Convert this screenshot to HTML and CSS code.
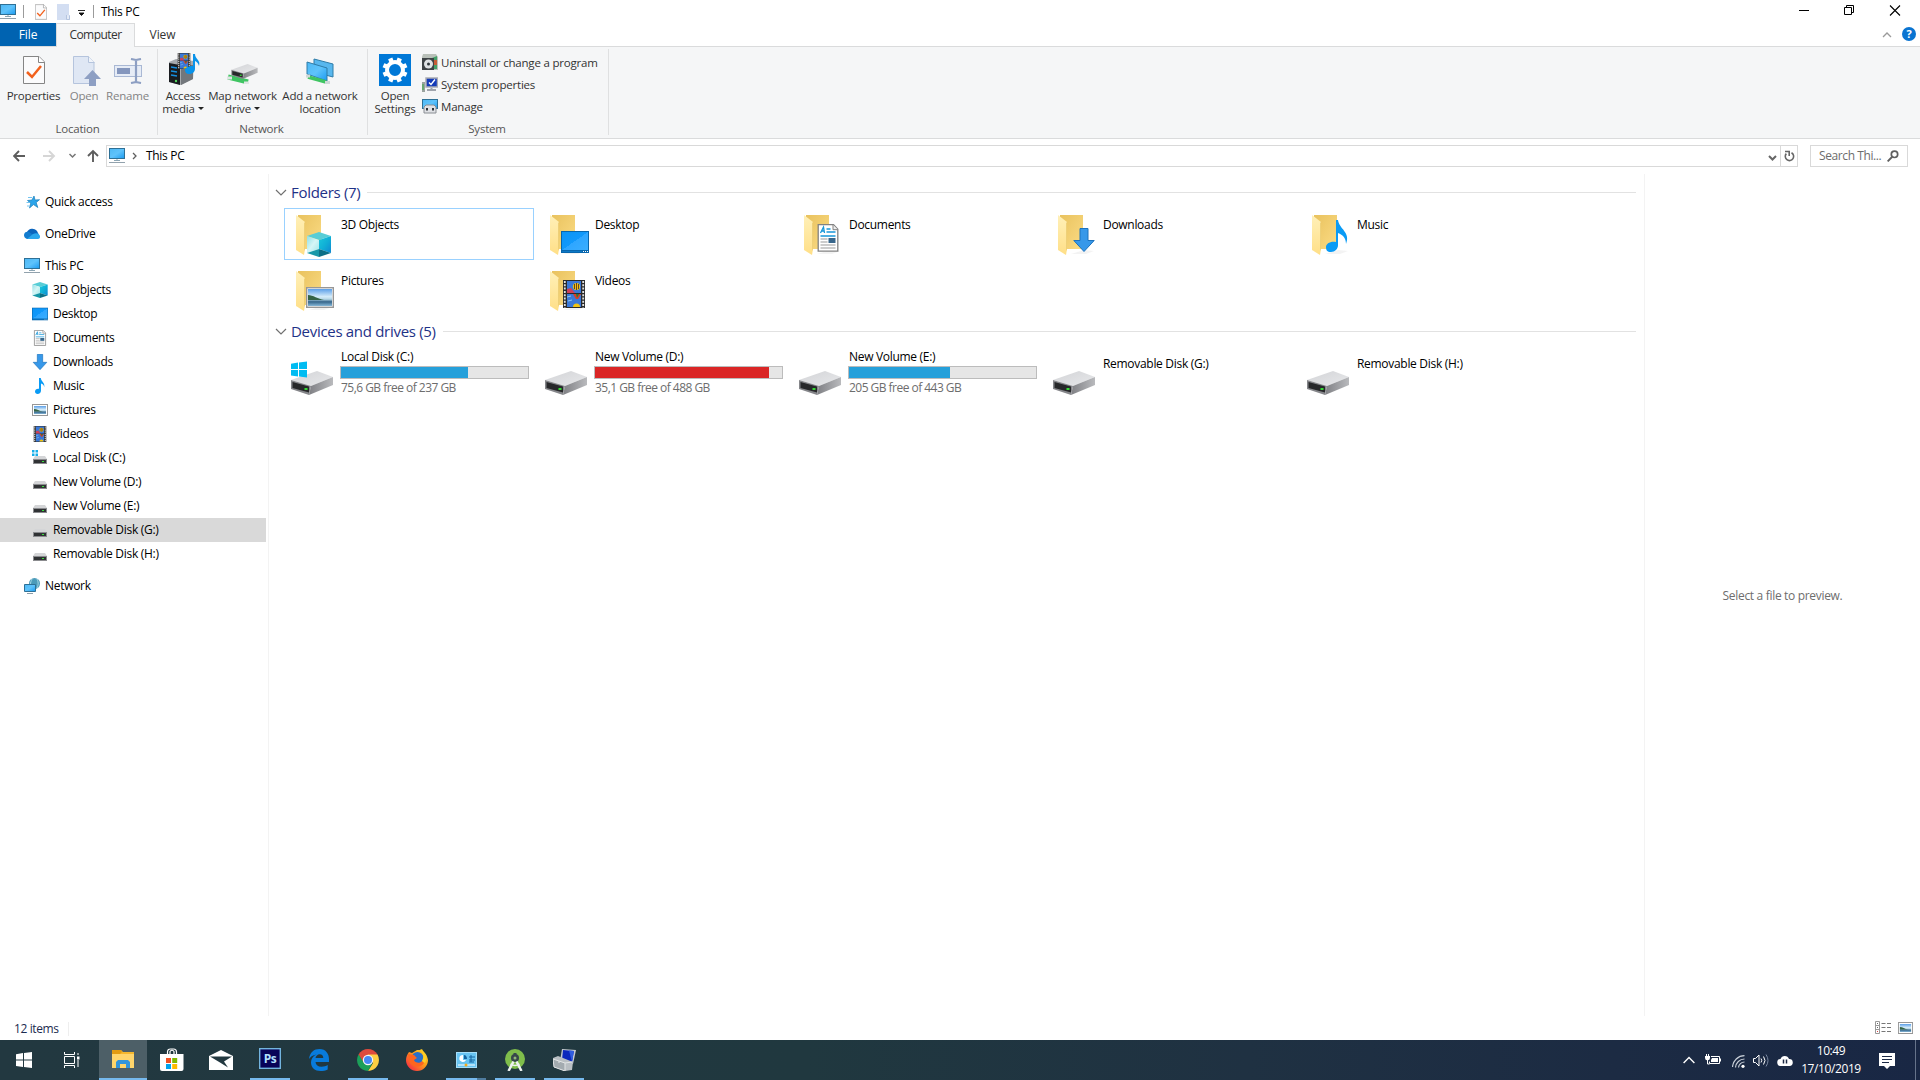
FILE: index.html
```html
<!DOCTYPE html>
<html lang="en">
<head>
<meta charset="utf-8">
<title>This PC</title>
<link rel="stylesheet" href="styles.css">
</head>
<body>
<svg class="sprite" aria-hidden="true">
  <defs>
    <linearGradient id="g-screen" x1="0" y1="0" x2="1" y2="1"><stop offset="0" stop-color="#4db8f5"/><stop offset=".5" stop-color="#5fc3fb"/><stop offset="1" stop-color="#1a9af0"/></linearGradient>
    <linearGradient id="g-desk" x1="0" y1="0" x2="1" y2="1"><stop offset="0" stop-color="#0c94f5"/><stop offset=".5" stop-color="#1199fb"/><stop offset=".5" stop-color="#2ea6ff"/><stop offset="1" stop-color="#3aaeff"/></linearGradient>
    <linearGradient id="g-back" x1="0" y1="0" x2="1" y2="1"><stop offset="0" stop-color="#e9c25e"/><stop offset="1" stop-color="#fbdc85"/></linearGradient>
    <linearGradient id="g-front" x1="0" y1="0" x2="0" y2="1"><stop offset="0" stop-color="#fff0b8"/><stop offset="1" stop-color="#ffdf87"/></linearGradient>
    <linearGradient id="g-drive" x1="0" y1="0" x2="1" y2="1"><stop offset="0" stop-color="#d2d3d6"/><stop offset="1" stop-color="#e8e9eb"/></linearGradient>
    <linearGradient id="g-side" x1="0" y1="0" x2="1" y2="0"><stop offset="0" stop-color="#7f8084"/><stop offset="1" stop-color="#b9babd"/></linearGradient>
    <linearGradient id="g-sky" x1="0" y1="0" x2="0" y2="1"><stop offset="0" stop-color="#5b9fe8"/><stop offset=".45" stop-color="#d5ecfa"/><stop offset=".6" stop-color="#b4d6e6"/><stop offset=".75" stop-color="#35658a"/><stop offset="1" stop-color="#86b8d8"/></linearGradient>
    <linearGradient id="g-fox" x1="1" y1="0" x2="0" y2="1"><stop offset="0" stop-color="#ffe226"/><stop offset=".45" stop-color="#ff9a1a"/><stop offset="1" stop-color="#f5144c"/></linearGradient>
    <linearGradient id="g-cube-l" x1="0" y1="0" x2="1" y2="1"><stop offset="0" stop-color="#8fe0e6"/><stop offset=".5" stop-color="#d6f6f6"/><stop offset="1" stop-color="#9de6e9"/></linearGradient>
    <linearGradient id="g-cube-r" x1="0" y1="0" x2="1" y2="1"><stop offset="0" stop-color="#1cc8dc"/><stop offset=".5" stop-color="#10b0d6"/><stop offset="1" stop-color="#1088d2"/></linearGradient>
  </defs>
  <symbol id="pc" viewBox="0 0 16 16"><rect x=".5" y=".5" width="15" height="10" fill="url(#g-screen)" stroke="#2e7096"/><path d="M5 12.5h6M8 11v1.500" stroke="#8da6b4"/><path d="M0 14.500h16" stroke="#92a2ad"/></symbol>
  <symbol id="check" viewBox="0 0 22 28"><path d="M.5.500h15.500l5.500 5.500v21.500H.5z" fill="#fbfbfc" stroke="#858585"/><path d="M15.500.500v6h6" fill="#fff" stroke="#858585"/><path d="M4 16l5 5 9-11" fill="none" stroke="#f2611d" stroke-width="2.500"/></symbol>
  <symbol id="blankdoc" viewBox="0 0 13 16"><path d="M0 0h12v11h1v5H0z" fill="#d3def2"/><path d="M9.500 11v4.500h3v-4" fill="#e4ebf7" stroke="#b5c4df"/></symbol>
  <symbol id="opendoc" viewBox="0 0 28 30"><path d="M.5.500h15l5.500 5.500v21.500H.5z" fill="#dfe7f4" stroke="#b5c4dd"/><path d="M15.500.500v6h6" fill="#f0f4fa" stroke="#b5c4dd"/><path d="M19.500 14L28 23h-5v7h-7v-7h-5z" fill="#8d9fc3"/></symbol>
  <symbol id="rename" viewBox="0 0 28 26"><rect x=".5" y="7.500" width="27" height="11" fill="#e6ecf6" stroke="#a9b8d4"/><rect x="3" y="10" width="13" height="6" fill="#8496bd"/><path d="M22 1v24M17 1l5 1 5-1M17 25l5-1 5 1" fill="none" stroke="#8d9fc3" stroke-width="2.200"/></symbol>
  <symbol id="note" viewBox="0 0 16 16"><path d="M7 0h1.800c.2 3.500 4.500 4.500 3.400 9.300-.2-2.200-1.400-3.300-3.200-3.800v7C9 14.600 7.600 16 5.600 16 4 16 3 15 3 13.600c0-2 1.800-3.200 4-2.800z" fill="#0a9bf5"/></symbol>
  <symbol id="film" viewBox="0 0 22 28"><path fill="#292a2c" d="M0 0h22v28H0z"/><path d="M1.800 1v27M20.200 1v27" stroke="#e2e2de" stroke-width="1.800" stroke-dasharray="2 1.300"/><path fill="#3a78d8" d="M4 1h14v12H4zM4 14h14v13H4z"/><circle cx="13.500" cy="6.500" r="3.600" fill="#f0c312"/><path d="M13.500 3v7M11.500 4v5M15.500 4v5" stroke="#4a2217" stroke-width=".8"/><path d="M4 9l4-1 4 5H4z" fill="#cc405a"/><path d="M10 14h8l-3 5h-2z" fill="#db3d25"/><path d="M13 14h3l-2 4z" fill="#1c7a42"/><path d="M10 27a3.500 3.500 0 0 1 7 0z" fill="#f0c312"/><path d="M4 17l4-1M5 21l4-1" stroke="#8cc9f3"/></symbol>
  <symbol id="media" viewBox="0 0 32 32"><path d="M0 9l7-3 18 2-1 18-12 6L0 29z" fill="#a6aaae"/><path d="M0 10l11 2v20L0 29z" fill="#191c20"/><path d="M2 14l6 1M2 18l6 1M2 22l6 1" stroke="#168edf" stroke-width="1.500"/><circle cx="7" cy="28" r="1.200" fill="#52d45f"/><path d="M24 12v14l-12 6V12z" fill="#72777c"/><use href="#film" x="7" y="0" width="16" height="16" preserveAspectRatio="none"/><path d="M24 1h2c0 5 6 6 4 12-1-3-2-4-4-5v8c0 3-3 5-6 5s-4-2-4-4 3-4 8-4z" fill="#0a93ea"/></symbol>
  <symbol id="drive" viewBox="0 0 42 24"><path d="M0 9L26 0l16 6-22 9z" fill="url(#g-drive)"/><path d="M20 15l22-9v8L18 24z" fill="url(#g-side)"/><path d="M0 9l20 6-2 9L0 18z" fill="#85868a"/><path d="M1.500 11L18 15.500v6L1.500 17z" fill="#27282a"/><rect x="13.500" y="17" width="3" height="2" fill="#36d936"/></symbol>
  <symbol id="netdrive" viewBox="0 0 32 20"><path d="M1 13l20 5" stroke="#3fc462" stroke-width="5"/><path d="M0 14h5M17 19h5" stroke="#dfe5e4" stroke-width="3"/><use href="#drive" x="3" y="0" width="29" height="15" preserveAspectRatio="none"/></symbol>
  <symbol id="netloc" viewBox="0 0 28 26"><path d="M8 1l19 5v13L8 14z" fill="#58b7ee" stroke="#2f7ca8"/><path d="M1 4l20 6v13L1 16z" fill="url(#g-screen)" stroke="#2f7ca8"/><path d="M2 19l18 5" stroke="#3fc462" stroke-width="3.500"/><path d="M0 18h4M19 24.500h5" stroke="#cfd8d8" stroke-width="3"/></symbol>
  <symbol id="settings" viewBox="0 0 32 32"><path fill="#0078d7" d="M0 0h32v32H0z"/><circle cx="16" cy="16" r="8" fill="none" stroke="#fff" stroke-width="4"/><g stroke="#fff" stroke-width="4.500"><path d="M16 8V3.500M16 24v4.500M8 16H3.500M24 16h4.500" transform="rotate(22.500 16 16)"/><path d="M16 8V3.500M16 24v4.500M8 16H3.500M24 16h4.500" transform="rotate(67.500 16 16)"/></g></symbol>
  <symbol id="uninstall" viewBox="0 0 16 16"><path d="M1 0h13l2 3v13H0V3z" fill="#b9c0b9"/><path d="M10 4l5-2v13h-5z" fill="#43a168"/><path d="M12 6h3v5h-3z" fill="#c65d36"/><path d="M0 4h12v12H0z" fill="#3d4245"/><circle cx="6.500" cy="10" r="4.500" fill="#dfe2e4"/><circle cx="6.500" cy="10" r="1.500" fill="#30373b"/></symbol>
  <symbol id="sysprop" viewBox="0 0 16 16"><rect y="6" width="3" height="10" fill="#9aa39f"/><path d="M1 8v6" stroke="#39ad43"/><rect x="4" y="2" width="11.500" height="9" fill="#143bb8" stroke="#a9acb4" stroke-width="1.500"/><path d="M7 6.500l2 2 4-5" stroke="#fff" stroke-width="1.400" fill="none"/><path d="M5 14h9M9.500 12v2" stroke="#a0a4ac" stroke-width="2"/></symbol>
  <symbol id="manage" viewBox="0 0 16 16"><rect x=".5" y="1.500" width="15" height="9" fill="url(#g-screen)" stroke="#2e7096"/><path d="M2 9l2-2h8l2 2v6H2z" fill="#dfe1e5" stroke="#8a8e94"/><path d="M5 10v2.500M11 10v2.500" stroke="#30343a" stroke-width="2"/></symbol>
  <symbol id="star" viewBox="0 0 16 16"><path d="M10 2l1 4 4.500-.3L12.200 8.500l1.600 5L9.500 10.600 5.500 14l1.200-4.700L3.500 6.500 8 6z" fill="#2aa4ea" stroke="#167cba" stroke-width=".7"/><path d="M4 3.500h4M2.500 8.500h3M3 12h2.500" stroke="#72c4f1"/></symbol>
  <symbol id="onedrive" viewBox="0 0 16 16"><path d="M4 13a4 4 0 0 1-1-7 6 6 0 0 1 10-1l3 6-4 2z" fill="#0b65bd"/><path d="M3 13c-2-1-3-2-3-4 0-3 3-4 5-3l6 4 3 3z" fill="#127ccf"/><path d="M3 13l6-5c4-2 7 0 7 3 0 1-1 2-2 2z" fill="#2aa7ed"/></symbol>
  <symbol id="cube" viewBox="0 0 24 25"><path d="M12 0l12 4-12 4L0 4z" fill="#58cdd6"/><path d="M0 4l12 4v9L0 21z" fill="url(#g-cube-l)"/><path d="M12 8l12-4v17l-12-4z" fill="url(#g-cube-r)"/><path d="M0 21l12-4v8z" fill="#1798a8"/><path d="M12 17l12 4-12 4z" fill="#0c6f86"/></symbol>
  <symbol id="desk" viewBox="0 0 28 22"><path fill="#0866ad" d="M0 0h28v22H0z"/><path fill="url(#g-desk)" d="M1 1h26v18H1z"/><path d="M1 20.500h20" stroke="#0d78c5"/><path d="M22 20.500h5" stroke="#fff" stroke-dasharray="1 1"/></symbol>
  <symbol id="doc" viewBox="0 0 21 28"><path d="M.7.700H16l4.300 4.500v22H.7z" fill="#fff" stroke="#828282" stroke-width="1.300"/><path d="M15.500.700v5h5" fill="#eee" stroke="#828282"/><path d="M3 9l3-6 1 6M4 7h3M9 5h4M9 8h9M3 12h15" stroke="#1897d9" stroke-width="1.300" fill="none"/><path d="M3 15h7M3 18h7M3 21h15M3 24h15" stroke="#999"/><path d="M11 14h7v5h-7z" fill="#38668b"/></symbol>
  <symbol id="down" viewBox="0 0 22 24"><path d="M7 .500h8v12h6.200L11 23.500.8 12.500H7z" fill="#3798e9" stroke="#1c72bd"/></symbol>
  <symbol id="pic" viewBox="0 0 28 21"><rect x=".7" y=".7" width="26.600" height="19.600" fill="#fff" stroke="#979797" stroke-width="1.400"/><path fill="url(#g-sky)" d="M2 2h24v17H2z"/><path d="M2 8c5 0 10 4 16 5H2z" fill="#366446"/></symbol>
  <symbol id="minipic" viewBox="0 0 16 16"><rect x=".5" y="2.500" width="15" height="11" fill="#fff" stroke="#979797"/><path fill="url(#g-sky)" d="M2 4h12v8H2z"/><path d="M2 7c3 0 5 2 9 2.500H2z" fill="#366446"/></symbol>
  <symbol id="minidrive" viewBox="0 0 16 16"><path d="M3 7h10l2 3H1z" fill="#d4d5d7"/><path d="M1 10h14v5H1z" fill="#8b8c8f"/><path d="M2 11h12v3H2z" fill="#303234"/><path d="M10 12h2v1h-2z" fill="#38df3c"/></symbol>
  <symbol id="minic" viewBox="0 0 16 16"><use href="#minidrive" y="-1" width="16" height="16"/><path d="M0 0h2.500v2.500H0zM3.500 0H6v2.500H3.500zM0 3.500h2.500V6H0zM3.500 3.500H6V6H3.500z" fill="#14aeea"/></symbol>
  <symbol id="net" viewBox="0 0 16 16"><circle cx="10.500" cy="5.500" r="5.500" fill="#4c9bb9"/><path d="M8 1c-2 4-2 7 0 9M13 1c2 4 1 7 0 9" stroke="#a7d9e6" fill="none"/><path d="M.5 6.500h11v7H.5z" fill="url(#g-screen)" stroke="#2e7096"/><path d="M3 15.500h6" stroke="#8b9da8"/></symbol>
  <symbol id="folder" viewBox="0 0 36 42"><path d="M2 0h23v34H2z" fill="url(#g-back)"/><path d="M26 35l10 1-8 3H13z" fill="#d7d7d7" opacity=".3"/><path d="M0 0l9 7v27l-1 6L0 35z" fill="url(#g-front)"/><path d="M9 7v27l-1 2V8z" fill="#eed078"/></symbol>
  <symbol id="win" viewBox="0 0 16 16"><path d="M0 2.200L7 1v6.600H0zM8 .9L16 0v7.600H8zM0 8.400h7V15l-7-1zM8 8.400h8V16l-8-1z"/></symbol>
</svg>

<header class="titlebar">
  <svg class="i16"><use href="#pc"/></svg><i class="bar"></i>
  <svg class="t-check"><use href="#check"/></svg>
  <svg class="t-blank"><use href="#blankdoc"/></svg>
  <svg class="t-drop" viewBox="0 0 7 6"><path d="M0 .500h7M1 3h5L3.500 5.500z" stroke="#111" fill="#111" stroke-width=".9"/></svg>
  <i class="bar"></i><span class="title">This PC</span>
  <div class="caption">
    <svg viewBox="0 0 46 23"><path d="M18 10.500h10" stroke="#000"/></svg>
    <svg viewBox="0 0 46 23"><path d="M17.500 7.500h7v7h-7zM19.500 7.500v-2h7v7h-2" fill="none" stroke="#000"/></svg>
    <svg viewBox="0 0 46 23"><path d="M17 5.500l10 10M27 5.500l-10 10" stroke="#000" stroke-width="1.100"/></svg>
  </div>
</header>

<nav class="tabs">
  <span class="tab file">File</span><span class="tab active">Computer</span><span class="tab view">View</span>
  <svg class="tabs-end" viewBox="0 0 36 18"><path d="M1 12l4-4 4 4" fill="none" stroke="#9a9a9a" stroke-width="1.300"/><circle cx="27" cy="9" r="7" fill="#0a74d1"/><text x="27" y="13" text-anchor="middle">?</text></svg>
</nav>

<section class="ribbon">
  <div class="group location">
    <div class="cmds">
      <div class="cmd w-prop"><span class="pic"><svg width="22" height="28"><use href="#check"/></svg></span>Properties</div>
      <div class="cmd w-open off"><span class="pic low"><svg width="28" height="30"><use href="#opendoc"/></svg></span>Open</div>
      <div class="cmd w-ren off"><span class="pic"><svg width="28" height="26"><use href="#rename"/></svg></span>Rename</div>
    </div>
    <div class="label">Location</div>
  </div>
  <div class="group network">
    <div class="cmds">
      <div class="cmd w-media"><span class="pic"><svg width="32" height="32"><use href="#media"/></svg></span>Access<br>media<b class="tri"></b></div>
      <div class="cmd w-map"><span class="pic"><svg width="32" height="20"><use href="#netdrive"/></svg></span>Map network<br>drive<b class="tri"></b></div>
      <div class="cmd w-add"><span class="pic"><svg width="28" height="26"><use href="#netloc"/></svg></span>Add a network<br>location</div>
    </div>
    <div class="label">Network</div>
  </div>
  <div class="group system">
    <div class="cmds">
      <div class="cmd w-set"><span class="pic low"><svg width="32" height="32"><use href="#settings"/></svg></span>Open<br>Settings</div>
      <div class="list">
        <div><svg class="i16"><use href="#uninstall"/></svg>Uninstall or change a program</div>
        <div><svg class="i16"><use href="#sysprop"/></svg>System properties</div>
        <div><svg class="i16"><use href="#manage"/></svg>Manage</div>
      </div>
    </div>
    <div class="label">System</div>
  </div>
</section>

<section class="address">
  <svg class="navkeys" viewBox="0 0 93 22"><g fill="none" stroke-width="1.900"><path d="M12 11H1M6 6l-5 5 5 5" stroke="#5d5d5d"/><path d="M30 11h11M36 6l5 5-5 5" stroke="#d6d6d6"/><path d="M56.500 9l3 3 3-3" stroke="#777" stroke-width="1.500"/><path d="M80 17V6M75 11l5-5 5 5" stroke="#5d5d5d"/></g></svg>
  <div class="path">
    <svg class="i16"><use href="#pc"/></svg>
    <svg class="crumb" viewBox="0 0 5 8"><path d="M1 1l3 3-3 3" fill="none" stroke="#5f5f5f" stroke-width="1.300"/></svg>
    <span>This PC</span>
    <svg class="p-drop" viewBox="0 0 9 6"><path d="M1 1l3.500 3.500L8 1" fill="none" stroke="#666" stroke-width="2"/></svg>
    <div class="refresh"><svg width="11" height="12" viewBox="0 0 11 12"><path d="M7.500 2.700A4.200 4.200 0 1 1 2.300 3.600M1 1.500h4.200V6" fill="none" stroke="#666" stroke-width="1.600"/></svg></div>
  </div>
  <div class="search"><span>Search Thi...</span><svg width="12" height="12" viewBox="0 0 12 12"><circle cx="7.500" cy="4.300" r="3.200" fill="none" stroke="#5f5f5f" stroke-width="1.700"/><path d="M5 7L.6 11.400" stroke="#5f5f5f" stroke-width="1.900"/></svg></div>
</section>

<main class="body">
  <aside class="tree">
    <div class="row top"><svg class="i16"><use href="#star"/></svg>Quick access</div>
    <div class="row top"><svg class="i16"><use href="#onedrive"/></svg>OneDrive</div>
    <div class="row top open"><svg class="i16"><use href="#pc"/></svg>This PC</div>
    <div class="row"><svg class="i16"><use href="#cube"/></svg>3D Objects</div>
    <div class="row"><svg class="i16"><use href="#desk"/></svg>Desktop</div>
    <div class="row"><svg class="i16"><use href="#doc"/></svg>Documents</div>
    <div class="row"><svg class="i16"><use href="#down"/></svg>Downloads</div>
    <div class="row"><svg class="i16"><use href="#note"/></svg>Music</div>
    <div class="row"><svg class="i16"><use href="#minipic"/></svg>Pictures</div>
    <div class="row"><svg class="i16" viewBox="0 0 16 16"><use href="#film" x="1" width="14" height="16"/></svg>Videos</div>
    <div class="row"><svg class="i16"><use href="#minic"/></svg>Local Disk (C:)</div>
    <div class="row"><svg class="i16"><use href="#minidrive"/></svg>New Volume (D:)</div>
    <div class="row"><svg class="i16"><use href="#minidrive"/></svg>New Volume (E:)</div>
    <div class="row chosen"><svg class="i16"><use href="#minidrive"/></svg>Removable Disk (G:)</div>
    <div class="row"><svg class="i16"><use href="#minidrive"/></svg>Removable Disk (H:)</div>
    <div class="row top last"><svg class="i16"><use href="#net"/></svg>Network</div>
  </aside>

  <section class="files">
    <h2><svg viewBox="0 0 12 7"><path d="M1 1l5 5 5-5" fill="none" stroke="#707070" stroke-width="1.200"/></svg>Folders (7)</h2>
    <div class="grid folders">
      <div class="tile focus"><svg class="ico" viewBox="0 0 42 46"><use href="#folder" width="36" height="42"/><use href="#cube" x="11" y="17" width="24" height="25"/></svg>3D Objects</div>
      <div class="tile"><svg class="ico" viewBox="0 0 42 46"><use href="#folder" width="36" height="42"/><use href="#desk" x="11" y="16" width="28" height="22"/></svg>Desktop</div>
      <div class="tile"><svg class="ico" viewBox="0 0 42 46"><use href="#folder" width="36" height="42"/><use href="#doc" x="13" y="9" width="22" height="28"/></svg>Documents</div>
      <div class="tile"><svg class="ico" viewBox="0 0 42 46"><use href="#folder" width="36" height="42"/><use href="#down" x="14" y="13" width="24" height="24"/></svg>Downloads</div>
      <div class="tile"><svg class="ico" viewBox="0 0 42 46"><use href="#folder" width="36" height="42"/><path d="M24 5h2c1 9 13 12 8 24 0-6-3-9-8-11v12c0 4-3 7-7 7s-5-2-5-5 4-6 10-5z" fill="#0a9bf5"/></svg>Music</div>
      <div class="tile"><svg class="ico" viewBox="0 0 42 46"><use href="#folder" width="36" height="42"/><use href="#pic" x="10" y="16" width="28" height="21"/></svg>Pictures</div>
      <div class="tile"><svg class="ico" viewBox="0 0 42 46"><use href="#folder" width="36" height="42"/><use href="#film" x="13" y="9" width="22" height="28"/></svg>Videos</div>
    </div>
    <h2 class="second"><svg viewBox="0 0 12 7"><path d="M1 1l5 5 5-5" fill="none" stroke="#707070" stroke-width="1.200"/></svg>Devices and drives (5)</h2>
    <div class="grid drives">
      <div class="disk"><svg class="dico" viewBox="0 0 42 34"><use href="#drive" y="10" width="42" height="24"/><use href="#win" width="16" height="17" fill="#00bcf2"/></svg><div class="info"><div>Local Disk (C:)</div><div class="meter"><i style="width:127px"></i></div><small>75,6 GB free of 237 GB</small></div></div>
      <div class="disk"><svg class="dico" viewBox="0 0 42 34"><use href="#drive" y="10" width="42" height="24"/></svg><div class="info"><div>New Volume (D:)</div><div class="meter full"><i style="width:174px"></i></div><small>35,1 GB free of 488 GB</small></div></div>
      <div class="disk"><svg class="dico" viewBox="0 0 42 34"><use href="#drive" y="10" width="42" height="24"/></svg><div class="info"><div>New Volume (E:)</div><div class="meter"><i style="width:101px"></i></div><small>205 GB free of 443 GB</small></div></div>
      <div class="disk"><svg class="dico" viewBox="0 0 42 34"><use href="#drive" y="10" width="42" height="24"/></svg><div class="info plain">Removable Disk (G:)</div></div>
      <div class="disk"><svg class="dico" viewBox="0 0 42 34"><use href="#drive" y="10" width="42" height="24"/></svg><div class="info plain">Removable Disk (H:)</div></div>
    </div>
  </section>
  <aside class="preview">Select a file to preview.</aside>
</main>

<footer class="status"><span>12 items</span>
  <svg class="s-list" viewBox="0 0 16 14"><path d="M.5.500h4v12h-4zM0 4.500h5M0 8.500h5" fill="none" stroke="#999"/><path d="M2 2.500h1M2 6.500h1" stroke="#666"/><path d="M2 10.500h1" stroke="#d44"/><path d="M6.500 2.500H16M6.500 6.500H16M6.500 10.500H16" stroke="#777" stroke-dasharray="4 1.500"/></svg>
  <svg class="s-big" viewBox="0 2 16 12" preserveAspectRatio="none"><use href="#minipic" width="16" height="16"/></svg>
</footer>

<div class="taskbar">
  <div class="tb start"><svg width="16" height="16" fill="#fff"><use href="#win"/></svg></div>
  <div class="tb view-btn"><svg width="16" height="16" viewBox="0 0 16 16"><path d="M.5 0v2.500h10V0M.5 16v-2.500h10V16M.5 4.500h10v7H.5z" fill="none" stroke="#fff"/><path d="M14 1v2M14 8v7" stroke="#fff"/><path fill="#fff" d="M13 4.500h2.500v3H13z"/></svg></div>
  <div class="tb current"><svg width="22" height="18" viewBox="0 0 22 18"><path d="M0 0h9l2 2h11v16H0z" fill="#f5b72e"/><path d="M0 4h22v14H0z" fill="#ffd56b"/><path d="M4 18v-6l2-2h10l2 2v6h-4v-4H8v4z" fill="#3295dc"/><path d="M0 0h9l1 2-2 2H0z" fill="#e29b12"/></svg></div>
  <div class="tb"><svg width="24" height="24" viewBox="0 0 24 24"><path d="M0 6h23.500v15q0 2-2 2H2q-2 0-2-2z" fill="#fff"/><path d="M7.500 6V4q0-3 3-3h3q3 0 3 3v2M10 6V3.500q2-2.500 4 0V6" fill="none" stroke="#fff" stroke-width="1.200"/><path d="M6 10h5v5H6z" fill="#f25022"/><path d="M12.200 10h5v5h-5z" fill="#7fba00"/><path d="M6 16h5v5H6z" fill="#00a4ef"/><path d="M12.200 16h5v5h-5z" fill="#ffb900"/></svg></div>
  <div class="tb"><svg width="24" height="20" viewBox="0 0 24 20"><path d="M0 6L12 0l12 6v14H0z" fill="#fff"/><path d="M1 6.500h22l-8 5 4 6-8-5z" fill="#223840"/></svg></div>
  <div class="tb run up"><svg width="22" height="21" viewBox="0 0 22 21"><rect x=".7" y=".7" width="20.600" height="19.600" fill="#080358" stroke="#73b4df" stroke-width="1.400"/><text x="11" y="14.500" text-anchor="middle" class="ps">Ps</text></svg></div>
  <div class="tb"><svg width="20" height="22" viewBox="0 0 20 22"><path d="M0 10C1 3 5 0 10.500 0 17 0 20 5 20 10v3H6.500c.3 3 2.500 4.700 6 4.700 2.500 0 4.500-.7 6.200-1.700v4.500c-2 1-4.500 1.500-7.200 1.500C6 22 2 18.500 2 13.500 2 10 4 7 7.500 5.600 3.500 6 1 8.500 0 10zm6.500-1h7.800c0-2.500-1.200-3.800-3.700-3.800C8.500 5.200 7 7 6.500 9z" fill="#087bdc"/></svg></div>
  <div class="tb run"><svg width="22" height="22" viewBox="0 0 22 22"><path d="M1.500 5.500A11 11 0 0 1 20.500 5.500L11 11z" fill="#dd4b3e"/><path d="M11 5.500h9.500A11 11 0 0 1 11 22l5-8z" fill="#fdcf42"/><path d="M1.500 5.500A11 11 0 0 0 11 22l4.500-8L7 13z" fill="#1c9f59"/><path d="M1.500 5.500L7 14l4-8.500z" fill="#dd4b3e"/><path d="M1.500 5.500L6.500 14 5 16z" fill="#1c9f59"/><circle cx="11" cy="11" r="5.200" fill="#f5f5f5"/><circle cx="11" cy="11" r="4" fill="#4688f4"/></svg></div>
  <div class="tb"><svg width="22" height="22" viewBox="0 0 22 22"><path d="M3 3l3 1 5-3 3 0 2-1c1 3 5 4 6 11a11 11 0 1 1-22 0c0-3 1-5 3-8z" fill="url(#g-fox)"/><circle cx="11.500" cy="9" r="6" fill="#2b6fc8"/><path d="M2 5l6 1 3 3-3 2c1 3 6 4 8 1l2 2c-4 6-13 4-15-2z" fill="#ff651f"/><path d="M14 0c5 5 3 10 2 12l3 2c3-5 1-10-5-14z" fill="#ffcf25"/></svg></div>
  <div class="tb run two"><svg width="21" height="16" viewBox="0 0 21 16"><rect x=".5" y=".5" width="20" height="15" fill="#68c4f2" stroke="#a5def9"/><path d="M7 3a3.500 3.500 0 1 0 3 5H7z" fill="#fff"/><path d="M8 3v4h3c0-2-1-4-3-4z" fill="#1564a0"/><path d="M13 5h6M13 8h6M13 10h5M15 3v7" stroke="#1564a0"/><path d="M2 13h17" stroke="#fff"/><circle cx="10" cy="13" r="1.500" fill="#f2a91c"/></svg></div>
  <div class="tb run"><svg width="20" height="22" viewBox="0 0 20 22"><circle cx="10" cy="10" r="10" fill="#7fbd4b"/><circle cx="10" cy="9" r="4" fill="#37474b"/><path d="M10 4v3" stroke="#37474b" stroke-width="3"/><path d="M8.500 12.500L3.500 22M11.500 12.500l5 9.500" stroke="#eef1ef" stroke-width="2.500"/><path d="M5.500 15q4.500 3 9 0" stroke="#eef1ef" stroke-width="1.300" fill="none"/><circle cx="10" cy="9" r="1.500" fill="#92b579"/></svg></div>
  <div class="tb run"><svg width="23" height="22" viewBox="0 0 23 22"><path d="M9 0l14 1-3 14-13-3z" fill="#c5cad0"/><path d="M10 1l11 1-2 11-10-2z" fill="#0c28bd"/><path d="M16 1.500l5 .5-2 11z" fill="#315de0"/><path d="M0 9l5-2 15 6-1 8-7 1-11-4z" fill="#b9bfc3"/><path d="M0 10l12 4v8L1 18zM6 12v2M12 14l7-1" fill="#a3abb0" stroke="#e1e4e5"/></svg></div>
  <div class="tray">
    <svg class="up-arrow" viewBox="0 0 12 8"><path d="M.6 7L6 1.500 11.400 7" fill="none" stroke="#fff" stroke-width="1.400"/></svg>
    <svg class="battery" viewBox="0 0 16 12"><path d="M6 2.500h8.500v7H4.500v-2" fill="none" stroke="#fff"/><path d="M7 4h6v4H6V6zM15 4.500h1v3h-1zM0 2h5v2q0 2-2.500 2.500Q0 6 0 4zM1 0v2M4 0v2" fill="#fff"/><path d="M1.500 0v2M3.500 0v2M2.500 6v4h2" stroke="#fff" fill="none"/></svg>
    <svg class="wifi" viewBox="0 0 13 13"><path d="M.5 12A12 12 0 0 1 12.500.700M3.500 12.500a9 9 0 0 1 9-8.500M6.500 12.500a6 6 0 0 1 6-5.500" fill="none" stroke="#c8cfd8" stroke-width="1.200"/><circle cx="11" cy="11.300" r="1.600" fill="#fff"/></svg>
    <svg class="sound" viewBox="0 0 16 13"><path d="M.5 4.500h2L6 1v11L2.500 8.500h-2z" fill="none" stroke="#fff"/><path d="M8 4.500q1.500 2 0 4M10.500 2.500q3 4 0 8" fill="none" stroke="#fff"/><path d="M13 .500q4 6 0 12" fill="none" stroke="#7887a0"/></svg>
    <svg class="cloud" viewBox="0 0 16 11"><path d="M4 11a3.500 3.500 0 0 1-.5-7A4.500 4.500 0 0 1 12 4a3.500 3.500 0 0 1 .5 7z" fill="#fff"/><path d="M6.500 4.500v4M9.500 4.500v4" stroke="#1c2a44" stroke-width="1.500"/></svg>
    <div class="clock">10:49<br>17/10/2019</div>
    <svg class="action" viewBox="0 0 16 16"><path d="M0 0h16v13h-5l-3 3-3-3H0z" fill="#fff"/><path d="M3 3.500h10M3 6.500h10M3 9.500h7" stroke="#1b2946"/></svg>
  </div>
  <i class="peek"></i>
</div>
</body>
</html>
```
FILE: styles.css
```css
* { box-sizing: border-box; }
body {
  margin: 0;
  width: 1920px;
  height: 1080px;
  overflow: hidden;
  display: flex;
  flex-direction: column;
  background: #fff;
  color: #000;
  font: 12px/16px "Open Sans", "Noto Sans", sans-serif;
  letter-spacing: -0.3px;
}
svg { display: block; flex: none; }
.sprite { position: absolute; width: 0; height: 0; }
.i16 { width: 16px; height: 16px; }

.titlebar { height: 23px; display: flex; align-items: center; }
.titlebar .bar { width: 1px; height: 13px; background: #9b9b9b; }
.titlebar .i16 { margin-right: 7px; }
.t-check { width: 12px; height: 16px; margin-left: 11px; }
.t-blank { width: 13px; height: 16px; margin-left: 10px; }
.t-drop { width: 7px; height: 6px; margin: 3px 8px 0; }
.title { margin-left: 7px; }
.caption { display: flex; margin-left: auto; margin-right: 1px; }
.caption svg { width: 46px; height: 23px; }

.tabs { height: 24px; display: flex; border-bottom: 1px solid #dadbdc; }
.tab { height: 23px; line-height: 24px; text-align: center; color: #333; letter-spacing: -0.1px; }
.file { width: 56px; background: #0063b1; color: #fff; }
.active { width: 79px; height: 24px; line-height: 22px; background: #f5f6f7; border: 1px solid #dadbdc; border-bottom: 0; letter-spacing: -0.55px; }
.view { width: 55px; }
.tabs-end { width: 36px; height: 18px; margin: 2px 2px 0 auto; }
.tabs-end text { font: bold 11px "Open Sans", sans-serif; fill: #fff; }

.ribbon { height: 92px; display: flex; background: #f5f6f7; border-bottom: 1px solid #dadbdc; padding-top: 2px; color: #333; font-size: 11.5px; line-height: 13px; letter-spacing: -0.2px; }
.group { height: 86px; display: flex; flex-direction: column; border-right: 1px solid #dfe0e1; }
.location { width: 158px; }
.network { width: 210px; }
.system { width: 241px; }
.cmds { display: flex; flex: 1; }
.cmd { text-align: center; white-space: nowrap; }
.cmd .pic { display: flex; height: 40px; padding-bottom: 5px; justify-content: center; align-items: flex-end; }
.cmd .low { padding-bottom: 3px; }
.off { color: #838383; }
.w-prop { width: 67px; }
.w-open { width: 34px; }
.w-open .pic { padding-left: 5px; }
.w-ren { width: 53px; }
.w-media { width: 50px; }
.w-media .pic { padding-left: 4px; padding-bottom: 4px; }
.w-map { width: 69px; }
.w-add { width: 86px; }
.w-set { width: 54px; }
.tri { display: inline-block; border: 3px solid transparent; border-top-color: #222; border-bottom: 0; margin-left: 3px; vertical-align: 3px; }
.list { padding-top: 2px; }
.list div { display: flex; align-items: center; gap: 3px; height: 22px; white-space: nowrap; }
.label { height: 13px; text-align: center; color: #555; padding-right: 2px; }

.address { height: 35px; display: flex; padding-top: 6px; align-items: flex-start; }
.navkeys { width: 93px; height: 22px; margin-left: 13px; }
.path { width: 1692px; height: 22px; border: 1px solid #d9d9d9; display: flex; align-items: center; }
.path .i16 { margin-left: 2px; }
.crumb { width: 5px; height: 8px; margin: 0 9px 0 7px; }
.p-drop { width: 9px; height: 6px; margin: 3px 3px 0 auto; }
.refresh { width: 17px; height: 20px; border-left: 1px solid #d9d9d9; display: grid; place-items: center; }
.search { width: 98px; height: 22px; margin-left: 12px; border: 1px solid #d9d9d9; display: flex; align-items: center; justify-content: space-between; padding: 0 8px; color: #6d6d6d; letter-spacing: -0.4px; }

.body { height: 842px; display: flex; }
.tree { width: 269px; border-right: 1px solid #f3f3f3; padding-top: 16px; }
.row { height: 24px; width: 266px; display: flex; align-items: center; gap: 5px; padding-left: 32px; white-space: nowrap; }
.row.top { padding-left: 24px; margin-bottom: 8px; }
.row.open { margin-bottom: 0; }
.row.last { margin-top: 8px; }
.chosen { background: #d9d9d9; }

.files { width: 1376px; border-right: 1px solid #f3f3f3; padding: 8px 8px 0 6px; }
h2 { margin: 0; height: 20px; display: flex; align-items: center; color: #1e3287; font-weight: 400; font-size: 15px; line-height: 20px; letter-spacing: -0.3px; }
h2 svg { width: 12px; height: 7px; margin-right: 4px; }
h2::after { content: ""; flex: 1; height: 1px; margin: 1px 0 0 7px; background: #e2e2e2; }
h2.second { margin-top: 5px; }
.grid { display: grid; grid-template-columns: repeat(5, 250px); column-gap: 4px; row-gap: 4px; padding-left: 9px; }
.folders { padding-top: 6px; }
.tile { height: 52px; display: flex; border: 1px solid transparent; padding: 6px 0 0 11px; gap: 3px; line-height: 19px; }
.focus { border-color: #99d1ff; }
.ico { width: 42px; height: 46px; }
.drives { padding-top: 8px; }
.disk { height: 52px; display: flex; padding-left: 7px; gap: 7px; }
.dico { width: 42px; height: 34px; margin-top: 12px; }
.info { width: 190px; }
.info > div:first-child, .plain { padding-left: 1px; }
.plain { padding-top: 7px; }
.meter { height: 13px; margin-top: 1px; border: 1px solid #bcbcbc; background: #e6e6e6; width: 189px; }
.meter i { display: block; height: 11px; background: #26a0da; }
.meter.full i { background: #da2626; }
.info small { display: block; font-size: 12px; line-height: 17px; letter-spacing: -0.53px; color: #6d6d6d; padding-left: 1px; }
.preview { flex: 1; padding-top: 414px; text-align: center; color: #6d6d6d; letter-spacing: -0.32px; }

.status { height: 24px; display: flex; align-items: center; padding: 1px 7px 0 14px; }
.status span { width: 55px; height: 14px; line-height: 14px; border-right: 1px solid #eee; color: #1b2b50; letter-spacing: -0.4px; }
.s-list { width: 16px; height: 14px; margin: -2px 7px 0 auto; }
.s-big { width: 15px; height: 12px; margin-top: -2px; }

.taskbar { height: 40px; display: flex; background: linear-gradient(90deg, #223840 0, #20383f 42%, #1f3142 65%, #1c2b43 84%, #192744 100%); }
.tb { width: 48px; height: 40px; margin-right: 1px; display: grid; place-items: center; }
.start { margin-right: 0; }
.view-btn { width: 51px; margin-right: 0; padding-right: 3px; }
.up { padding-bottom: 3px; }
.current { background: #4d5f67; border-bottom: 2px solid #76b9ed; }
.run { background: linear-gradient(#76b9ed, #76b9ed) center bottom / 40px 2px no-repeat; }
.two { background: linear-gradient(90deg, #76b9ed 31px, #4f7c9f 31px) center bottom / 40px 2px no-repeat; }
.ps { font: bold 12px "Open Sans", sans-serif; fill: #b1dffc; letter-spacing: -0.5px; }
.tray { margin-left: auto; display: flex; align-items: center; color: #fff; }
.up-arrow { width: 12px; height: 8px; margin-right: 10px; }
.battery { width: 16px; height: 12px; margin-right: 11px; }
.wifi { width: 13px; height: 13px; margin: 2px 8px 0 0; }
.sound { width: 16px; height: 13px; margin-right: 8px; }
.cloud { width: 16px; height: 11px; margin-right: 8px; }
.clock { width: 60px; text-align: center; line-height: 18px; letter-spacing: -0.4px; }
.action { width: 16px; height: 16px; margin: 1px 20px 0 18px; }
.peek { width: 1px; background: #66738a; margin-right: 4px; }
```
